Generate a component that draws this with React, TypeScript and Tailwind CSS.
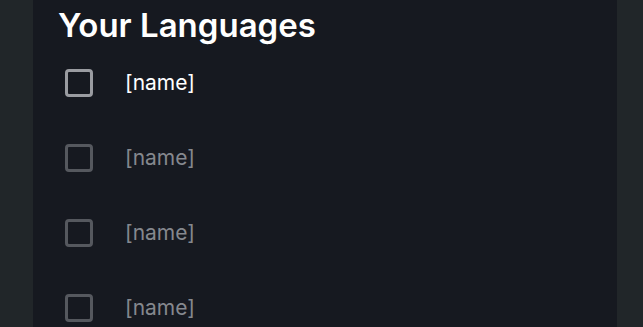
const ITEMS = [
  { name: '[name]', active: true },
  { name: '[name]', active: false },
  { name: '[name]', active: false },
  { name: '[name]', active: false },
]

export default function App() {
  return (
    <div className="h-[327px] w-full overflow-hidden bg-[#212629] px-[33px]" style={{ fontFamily: 'Inter, "Noto Sans", sans-serif' }}>
      <div className="h-full w-[584px] bg-[#161920] pl-[25px] pt-[5px]">
        <h2 className="text-[33px] font-semibold leading-[40px] text-white">Your Languages</h2>
        <ul className="mt-[24px] flex flex-col gap-[47px] pl-[7px]">
          {ITEMS.map((item, i) => (
            <li key={i} className="flex h-[28px] items-center">
              <span
                className={
                  item.active
                    ? 'h-[28px] w-[28px] rounded-[4px] border-[3px] border-[#9a9ca1]'
                    : 'h-[28px] w-[28px] rounded-[4px] border-[3px] border-[#55585e]'
                }
              />
              <span className={item.active ? 'ml-[32px] text-[21px] text-white' : 'ml-[32px] text-[21px] text-[#85888e]'}>
                {item.name}
              </span>
            </li>
          ))}
        </ul>
      </div>
    </div>
  )
}
